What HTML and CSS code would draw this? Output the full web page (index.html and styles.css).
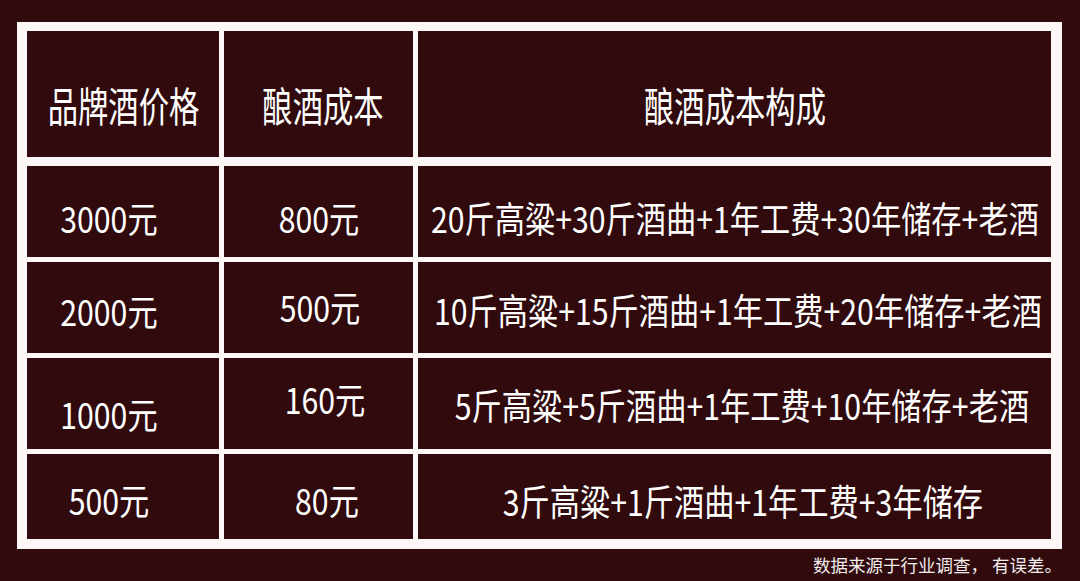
FILE: index.html
```html
<!DOCTYPE html>
<html lang="zh-CN">
<head>
<meta charset="utf-8">
<title>品牌酒价格与酿酒成本</title>
<link rel="stylesheet" href="styles.css">
</head>
<body>
<div class="table">
  <div class="cell head"><span class="t th">品牌酒价格</span></div>
  <div class="cell head h2"><span class="t th">酿酒成本</span></div>
  <div class="cell head"><span class="t th">酿酒成本构成</span></div>

  <div class="cell c1 r1"><span class="t">3000元</span></div>
  <div class="cell r1"><span class="t">800元</span></div>
  <div class="cell r1"><span class="t">20斤高粱+30斤酒曲+1年工费+30年储存+老酒</span></div>

  <div class="cell c1 r2a"><span class="t">2000元</span></div>
  <div class="cell r2b"><span class="t">500元</span></div>
  <div class="cell r2c"><span class="t">10斤高粱+15斤酒曲+1年工费+20年储存+老酒</span></div>

  <div class="cell c1 r3a"><span class="t">1000元</span></div>
  <div class="cell r3b"><span class="t">160元</span></div>
  <div class="cell r3c"><span class="t">5斤高粱+5斤酒曲+1年工费+10年储存+老酒</span></div>

  <div class="cell c1 r4a"><span class="t">500元</span></div>
  <div class="cell r4b"><span class="t">80元</span></div>
  <div class="cell r4c"><span class="t">3斤高粱+1斤酒曲+1年工费+3年储存</span></div>
</div>
<p class="note">数据来源于行业调查， 有误差。</p>
</body>
</html>
```

FILE: styles.css
```css
html, body {
  margin: 0;
  padding: 0;
  background: #300a0c;
}

body {
  width: 1080px;
  height: 581px;
  overflow: hidden;
  font-family: "Noto Sans CJK SC", "Noto Sans", sans-serif;
}

.table {
  display: grid;
  grid-template-columns: 192px 189px 633px;
  grid-template-rows: 130px 91px 91px 91px 85px;
  column-gap: 5px;
  row-gap: 5px;
  background: #fbf7f6;
  padding: 9px 11px 10px 10px;
  margin: 22px 0 0 17px;
  width: 1045px;
  box-sizing: border-box;
}

.cell {
  background: #300a0c;
  color: #ffffff;
  display: flex;
  align-items: center;
  justify-content: center;
  font-size: 36px;
  font-weight: 400;
  box-sizing: border-box;
  white-space: nowrap;
}

.t {
  display: inline-block;
  line-height: 1;
  transform: scaleX(0.84);
  transform-origin: center;
}

.head {
  margin-bottom: 4px;
  padding-top: 20px;
  font-size: 41px;
}

.th {
  transform: scaleX(0.74);
}

.h2 {
  padding-left: 9px;
}

.c1 {
  padding-right: 29px;
}

.r1 { padding-top: 10px; }

.r2a { padding-top: 5px; }
.r2b { padding-bottom: 3px; padding-left: 3px; }
.r2c { padding-top: 2px; padding-left: 6px; }

.r3a { padding-top: 18px; }
.r3b { padding-bottom: 12px; padding-left: 12px; }
.r3c { padding-left: 14px; }

.r4a { padding-top: 5px; }
.r4b { padding-top: 5px; padding-left: 17px; }
.r4c { padding-top: 7px; padding-left: 16px; }

.note {
  width: 1045px;
  margin: 6px 0 0 17px;
  text-align: right;
  font-size: 17.5px;
  line-height: 20px;
  color: #f2eeee;
  white-space: nowrap;
}
```
